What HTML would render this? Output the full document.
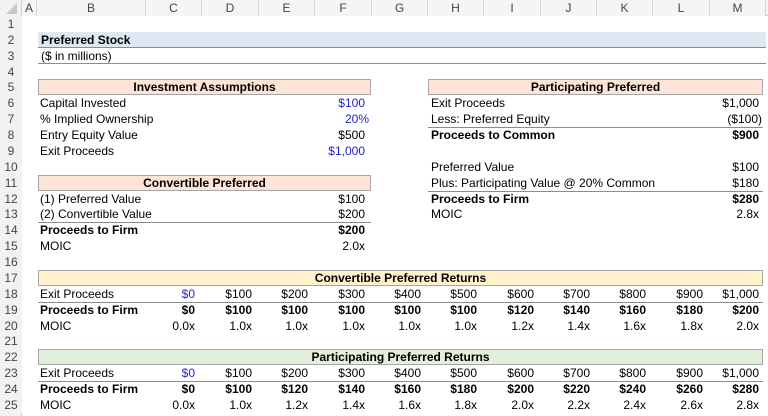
<!DOCTYPE html>
<html><head><meta charset="utf-8"><style>
body{margin:0;width:768px;height:416px;overflow:hidden;background:#fff;font-family:"Liberation Sans",Arial,sans-serif;font-size:12px;color:#000;position:relative}
div{position:absolute;box-sizing:border-box;white-space:nowrap}
.ch{top:0;height:16px;line-height:16px;text-align:center;color:#444;border-right:1px solid #d8d8d8;background:#f5f5f5;font-size:12px}
.rn{left:0;width:22px;height:16px;line-height:16px;text-align:center;color:#444;background:#f2f2f2;font-size:12px}
.c{height:16px;line-height:16px}
.l{padding-left:3px}
.r{text-align:right;padding-right:7px}
.b{font-weight:bold}
.bl{color:#1f1fd0}
.box{border:1px solid #a6a6a6;height:16px;line-height:14px;text-align:center;font-weight:bold}
.ln{height:1px;background:#8c8c8c}
</style></head><body>
<div style="left:0;top:0;width:768px;height:16px;background:#f5f5f5;border-bottom:1px solid #cfcfcf"></div>
<div style="left:0;top:0;width:22px;height:416px;background:#f2f2f2;border-right:1px solid #cfcfcf"></div>
<div style="left:6px;top:3px;width:0;height:0;border-left:11px solid transparent;border-bottom:11px solid #c8c8c8"></div>
<div class="ch" style="left:22px;width:15px">A</div>
<div class="ch" style="left:37px;width:109px">B</div>
<div class="ch" style="left:146px;width:56px">C</div>
<div class="ch" style="left:202px;width:57px">D</div>
<div class="ch" style="left:259px;width:56px">E</div>
<div class="ch" style="left:315px;width:57px">F</div>
<div class="ch" style="left:372px;width:56px">G</div>
<div class="ch" style="left:428px;width:56px">H</div>
<div class="ch" style="left:484px;width:57px">I</div>
<div class="ch" style="left:541px;width:56px">J</div>
<div class="ch" style="left:597px;width:56px">K</div>
<div class="ch" style="left:653px;width:57px">L</div>
<div class="ch" style="left:710px;width:56px">M</div>

<div class="rn" style="top:16px">1</div><div class="rn" style="top:32px">2</div><div class="rn" style="top:48px">3</div><div class="rn" style="top:64px">4</div><div class="rn" style="top:79px">5</div><div class="rn" style="top:95px">6</div><div class="rn" style="top:111px">7</div><div class="rn" style="top:127px">8</div><div class="rn" style="top:143px">9</div><div class="rn" style="top:159px">10</div><div class="rn" style="top:175px">11</div><div class="rn" style="top:191px">12</div><div class="rn" style="top:206px">13</div><div class="rn" style="top:222px">14</div><div class="rn" style="top:238px">15</div><div class="rn" style="top:254px">16</div><div class="rn" style="top:270px">17</div><div class="rn" style="top:286px">18</div><div class="rn" style="top:302px">19</div><div class="rn" style="top:318px">20</div><div class="rn" style="top:333px">21</div><div class="rn" style="top:349px">22</div><div class="rn" style="top:365px">23</div><div class="rn" style="top:381px">24</div><div class="rn" style="top:397px">25</div>

<!-- title -->
<div class="c l b" style="left:38px;top:32px;width:728px;background:#dde8f3;border-bottom:1px solid #8c8c8c">Preferred Stock</div>
<div class="c l" style="left:38px;top:48px;width:728px;border-bottom:1px solid #8c8c8c">($ in millions)</div>

<!-- Investment Assumptions -->
<div class="box" style="left:38px;top:79px;width:333px;background:#fce4d6">Investment Assumptions</div>
<div class="c l" style="left:37px;top:95px">Capital Invested</div><div class="c r bl" style="left:315px;top:95px;width:57px">$100</div>
<div class="c l" style="left:37px;top:111px">% Implied Ownership</div><div class="c r bl" style="left:315px;top:111px;width:57px;padding-right:3px">20%</div>
<div class="c l" style="left:37px;top:127px">Entry Equity Value</div><div class="c r" style="left:315px;top:127px;width:57px">$500</div>
<div class="c l" style="left:37px;top:143px">Exit Proceeds</div><div class="c r bl" style="left:315px;top:143px;width:57px">$1,000</div>

<!-- Convertible Preferred -->
<div class="box" style="left:38px;top:175px;width:333px;background:#fce4d6">Convertible Preferred</div>
<div class="c l" style="left:37px;top:191px">(1) Preferred Value</div><div class="c r" style="left:315px;top:191px;width:57px">$100</div>
<div class="c l" style="left:37px;top:206px">(2) Convertible Value</div><div class="c r" style="left:315px;top:206px;width:57px">$200</div>
<div class="ln" style="left:38px;top:222px;width:333px"></div>
<div class="c l b" style="left:37px;top:222px">Proceeds to Firm</div><div class="c r b" style="left:315px;top:222px;width:57px">$200</div>
<div class="c l" style="left:37px;top:238px">MOIC</div><div class="c r" style="left:315px;top:238px;width:57px">2.0x</div>

<!-- Participating Preferred -->
<div class="box" style="left:428px;top:79px;width:335px;background:#fce4d6">Participating Preferred</div>
<div class="c l" style="left:428px;top:95px">Exit Proceeds</div><div class="c r" style="left:700px;top:95px;width:66px">$1,000</div>
<div class="c l" style="left:428px;top:111px">Less: Preferred Equity</div><div class="c r" style="left:700px;top:111px;width:66px;padding-right:4px">($100)</div>
<div class="ln" style="left:428px;top:127px;width:335px"></div>
<div class="c l b" style="left:428px;top:127px">Proceeds to Common</div><div class="c r b" style="left:700px;top:127px;width:66px">$900</div>
<div class="c l" style="left:428px;top:159px">Preferred Value</div><div class="c r" style="left:700px;top:159px;width:66px">$100</div>
<div class="c l" style="left:428px;top:175px">Plus: Participating Value @ 20% Common</div><div class="c r" style="left:700px;top:175px;width:66px">$180</div>
<div class="ln" style="left:428px;top:191px;width:335px"></div>
<div class="c l b" style="left:428px;top:191px">Proceeds to Firm</div><div class="c r b" style="left:700px;top:191px;width:66px">$280</div>
<div class="c l" style="left:428px;top:206px">MOIC</div><div class="c r" style="left:700px;top:206px;width:66px">2.8x</div>

<!-- Convertible returns -->
<div class="box" style="left:38px;top:270px;width:725px;background:#fff2cc">Convertible Preferred Returns</div>
<div class="ln" style="left:38px;top:302px;width:725px"></div>
<div class="ln" style="left:38px;top:381px;width:725px"></div>
<div class="box" style="left:38px;top:349px;width:725px;background:#e2efda">Participating Preferred Returns</div>

<div class="c l" style="left:37px;top:286px">Exit Proceeds</div>
<div class="c l b" style="left:37px;top:302px">Proceeds to Firm</div>
<div class="c l" style="left:37px;top:318px">MOIC</div>
<div class="c l" style="left:37px;top:365px">Exit Proceeds</div>
<div class="c l b" style="left:37px;top:381px">Proceeds to Firm</div>
<div class="c l" style="left:37px;top:397px">MOIC</div>

<!-- row 18 / 23 -->
<div class="c r bl" style="left:146px;top:286px;width:56px">$0</div>
<div class="c r" style="left:202px;top:286px;width:57px">$100</div><div class="c r" style="left:259px;top:286px;width:56px">$200</div><div class="c r" style="left:315px;top:286px;width:57px">$300</div><div class="c r" style="left:372px;top:286px;width:56px">$400</div><div class="c r" style="left:428px;top:286px;width:56px">$500</div><div class="c r" style="left:484px;top:286px;width:57px">$600</div><div class="c r" style="left:541px;top:286px;width:56px">$700</div><div class="c r" style="left:597px;top:286px;width:56px">$800</div><div class="c r" style="left:653px;top:286px;width:57px">$900</div><div class="c r" style="left:710px;top:286px;width:56px">$1,000</div>
<div class="c r b" style="left:146px;top:302px;width:56px">$0</div>
<div class="c r b" style="left:202px;top:302px;width:57px">$100</div><div class="c r b" style="left:259px;top:302px;width:56px">$100</div><div class="c r b" style="left:315px;top:302px;width:57px">$100</div><div class="c r b" style="left:372px;top:302px;width:56px">$100</div><div class="c r b" style="left:428px;top:302px;width:56px">$100</div><div class="c r b" style="left:484px;top:302px;width:57px">$120</div><div class="c r b" style="left:541px;top:302px;width:56px">$140</div><div class="c r b" style="left:597px;top:302px;width:56px">$160</div><div class="c r b" style="left:653px;top:302px;width:57px">$180</div><div class="c r b" style="left:710px;top:302px;width:56px">$200</div>
<div class="c r" style="left:146px;top:318px;width:56px">0.0x</div>
<div class="c r" style="left:202px;top:318px;width:57px">1.0x</div><div class="c r" style="left:259px;top:318px;width:56px">1.0x</div><div class="c r" style="left:315px;top:318px;width:57px">1.0x</div><div class="c r" style="left:372px;top:318px;width:56px">1.0x</div><div class="c r" style="left:428px;top:318px;width:56px">1.0x</div><div class="c r" style="left:484px;top:318px;width:57px">1.2x</div><div class="c r" style="left:541px;top:318px;width:56px">1.4x</div><div class="c r" style="left:597px;top:318px;width:56px">1.6x</div><div class="c r" style="left:653px;top:318px;width:57px">1.8x</div><div class="c r" style="left:710px;top:318px;width:56px">2.0x</div>

<div class="c r bl" style="left:146px;top:365px;width:56px">$0</div>
<div class="c r" style="left:202px;top:365px;width:57px">$100</div><div class="c r" style="left:259px;top:365px;width:56px">$200</div><div class="c r" style="left:315px;top:365px;width:57px">$300</div><div class="c r" style="left:372px;top:365px;width:56px">$400</div><div class="c r" style="left:428px;top:365px;width:56px">$500</div><div class="c r" style="left:484px;top:365px;width:57px">$600</div><div class="c r" style="left:541px;top:365px;width:56px">$700</div><div class="c r" style="left:597px;top:365px;width:56px">$800</div><div class="c r" style="left:653px;top:365px;width:57px">$900</div><div class="c r" style="left:710px;top:365px;width:56px">$1,000</div>
<div class="c r b" style="left:146px;top:381px;width:56px">$0</div>
<div class="c r b" style="left:202px;top:381px;width:57px">$100</div><div class="c r b" style="left:259px;top:381px;width:56px">$120</div><div class="c r b" style="left:315px;top:381px;width:57px">$140</div><div class="c r b" style="left:372px;top:381px;width:56px">$160</div><div class="c r b" style="left:428px;top:381px;width:56px">$180</div><div class="c r b" style="left:484px;top:381px;width:57px">$200</div><div class="c r b" style="left:541px;top:381px;width:56px">$220</div><div class="c r b" style="left:597px;top:381px;width:56px">$240</div><div class="c r b" style="left:653px;top:381px;width:57px">$260</div><div class="c r b" style="left:710px;top:381px;width:56px">$280</div>
<div class="c r" style="left:146px;top:397px;width:56px">0.0x</div>
<div class="c r" style="left:202px;top:397px;width:57px">1.0x</div><div class="c r" style="left:259px;top:397px;width:56px">1.2x</div><div class="c r" style="left:315px;top:397px;width:57px">1.4x</div><div class="c r" style="left:372px;top:397px;width:56px">1.6x</div><div class="c r" style="left:428px;top:397px;width:56px">1.8x</div><div class="c r" style="left:484px;top:397px;width:57px">2.0x</div><div class="c r" style="left:541px;top:397px;width:56px">2.2x</div><div class="c r" style="left:597px;top:397px;width:56px">2.4x</div><div class="c r" style="left:653px;top:397px;width:57px">2.6x</div><div class="c r" style="left:710px;top:397px;width:56px">2.8x</div>
</body></html>
